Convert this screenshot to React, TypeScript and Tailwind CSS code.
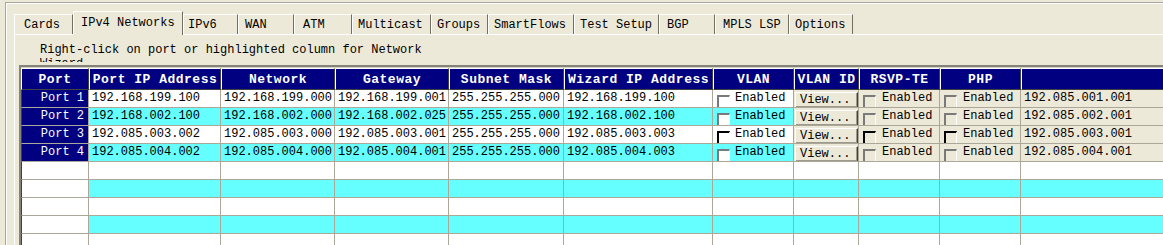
import clsx from "clsx";

type Row = {
  port: string;
  ip: string;
  net: string;
  gw: string;
  mask: string;
  wiz: string;
  last: string;
  dark?: boolean;
};

const rows: Row[] = [
  { port: "Port 1", ip: "192.168.199.100", net: "192.168.199.000", gw: "192.168.199.001", mask: "255.255.255.000", wiz: "192.168.199.100", last: "192.085.001.001" },
  { port: "Port 2", ip: "192.168.002.100", net: "192.168.002.000", gw: "192.168.002.025", mask: "255.255.255.000", wiz: "192.168.002.100", last: "192.085.002.001" },
  { port: "Port 3", ip: "192.085.003.002", net: "192.085.003.000", gw: "192.085.003.001", mask: "255.255.255.000", wiz: "192.085.003.003", last: "192.085.003.001", dark: true },
  { port: "Port 4", ip: "192.085.004.002", net: "192.085.004.000", gw: "192.085.004.001", mask: "255.255.255.000", wiz: "192.085.004.003", last: "192.085.004.001" },
];

const tabs = [
  { label: "Cards", w: "w-[59px] pl-[9px]" },
  { label: "IPv4 Networks", w: "w-[110px] pl-[7px]", active: true },
  { label: "IPv6", w: "w-[55px] pl-[4px]" },
  { label: "WAN", w: "w-[56px] pl-[6px]" },
  { label: "ATM", w: "w-[58px] pl-[8px]" },
  { label: "Multicast", w: "w-[79px] pl-[5px]" },
  { label: "Groups", w: "w-[57px] pl-[5px]" },
  { label: "SmartFlows", w: "w-[86px] pl-[5px]" },
  { label: "Test Setup", w: "w-[85px] pl-[5px]" },
  { label: "BGP", w: "w-[56px] pl-[7px]" },
  { label: "MPLS LSP", w: "w-[74px] pl-[7px]" },
  { label: "Options", w: "w-[64px] pl-[5px]" },
];

const headers = [
  "Port",
  "Port IP Address",
  "Network",
  "Gateway",
  "Subnet Mask",
  "Wizard IP Address",
  "VLAN",
  "VLAN ID",
  "RSVP-TE",
  "PHP",
  "",
];

const line = "border-r border-b border-[#aca899]";

function Check({ dark, disabled }: { dark?: boolean; disabled?: boolean }) {
  return (
    <span
      className={clsx(
        "mt-[5px] block h-[13px] w-[13px] shrink-0 border-t-2 border-l-2 border-r border-b border-r-white border-b-[#f4f2ea]",
        dark ? "border-t-black border-l-black" : "border-t-[#7a7a7a] border-l-[#7a7a7a]",
        disabled ? "bg-[#ece9d8]" : "bg-white"
      )}
    />
  );
}

function TextCell({ children, bg }: { children: React.ReactNode; bg: string }) {
  return (
    <div className={clsx(line, bg, "h-[18px] overflow-hidden whitespace-nowrap pl-[3px] leading-[16px]")}>
      {children}
    </div>
  );
}

export default function App() {
  return (
    <div className="relative h-[245px] w-[1163px] overflow-hidden bg-[#ece9d8] pl-[5px] pt-[2px] font-['Liberation_Mono',monospace] text-[12px] text-black">
      {/* outer frame */}
      <div className="h-[300px] border-l border-t border-[#aca899]">
        <div className="h-full border-l border-t border-white">
          {/* tab strip */}
          <div className="ml-[7px] mt-[7px] flex h-[23px] items-end">
            {tabs.map((t) =>
              t.active ? (
                <div
                  key={t.label}
                  className={clsx(
                    t.w,
                    "relative z-10 -mb-px flex h-[24px] shrink-0 items-center border-l border-t border-r border-white border-r-[#716f64] bg-[#ece9d8] pb-[2px] leading-none"
                  )}
                >
                  {t.label}
                </div>
              ) : (
                <div
                  key={t.label}
                  className={clsx(
                    t.w,
                    "flex h-[20px] shrink-0 items-center border-l border-t border-r border-white border-r-[#716f64] leading-none"
                  )}
                >
                  {t.label}
                </div>
              )
            )}
          </div>

          {/* tab panel */}
          <div className="ml-[7px] h-[260px] border-l border-t border-white">
            {/* label control is shorter than its text: the second line is clipped, as in the original dialog */}
            <div className="mb-[3px] ml-[25px] mt-[8px] h-[19px] w-[400px] overflow-hidden leading-[14px]">
              Right-click on port or highlighted column for Network Wizard
            </div>

            {/* grid */}
            <div className="ml-[4px] border-l-2 border-t-2 border-[#858278] bg-[#d4d0c8] pt-px">
              <div className="grid grid-cols-[68px_132px_114px_114px_115px_149px_81px_65px_81px_81px_180px] bg-white">
                {headers.map((h) => (
                  <div
                    key={h || "blank"}
                    className="flex h-[22px] items-center justify-center overflow-hidden whitespace-nowrap border-l border-t border-white border-r border-b border-r-[#404040] border-b-[#404040] bg-[#000080] pt-px text-[13px] font-bold tracking-[0.5px] text-white"
                  >
                    {h}
                  </div>
                ))}

                {rows.map((r, i) => {
                  const bg = i % 2 === 0 ? "bg-white" : "bg-[#66ffff]";
                  return [
                    <div
                      key={`p${i}`}
                      className="h-[18px] border-l border-l-[#404040] border-r border-b border-[#aca899] bg-[#000080] pr-[4px] text-right leading-[16px] text-white"
                    >
                      {r.port}
                    </div>,
                    <TextCell key={`a${i}`} bg={bg}>{r.ip}</TextCell>,
                    <TextCell key={`b${i}`} bg={bg}>{r.net}</TextCell>,
                    <TextCell key={`c${i}`} bg={bg}>{r.gw}</TextCell>,
                    <TextCell key={`d${i}`} bg={bg}>{r.mask}</TextCell>,
                    <TextCell key={`e${i}`} bg={bg}>{r.wiz}</TextCell>,
                    <div key={`f${i}`} className={clsx(line, bg, "flex h-[18px] items-start gap-[5px] overflow-hidden pl-[4px] leading-[16px]")}>
                      <Check dark={r.dark} />
                      <span>Enabled</span>
                    </div>,
                    <div key={`g${i}`} className={clsx(line, "h-[18px] overflow-hidden bg-[#ece9d8] pl-px pt-[2px]")}>
                      <div className="h-[16px] w-[63px] border-l border-t border-r border-b border-white border-r-[#404040] border-b-[#404040] pl-[4px] leading-[14px] shadow-[inset_-1px_-1px_0_#9d9a8c]">
                        View...
                      </div>
                    </div>,
                    <div key={`h${i}`} className={clsx(line, "flex h-[18px] items-start gap-[6px] overflow-hidden bg-[#ece9d8] pl-[4px] leading-[16px]")}>
                      <Check dark={r.dark} disabled />
                      <span>Enabled</span>
                    </div>,
                    <div key={`k${i}`} className={clsx(line, "flex h-[18px] items-start gap-[6px] overflow-hidden bg-[#ece9d8] pl-[4px] leading-[16px]")}>
                      <Check dark={r.dark} disabled />
                      <span>Enabled</span>
                    </div>,
                    <TextCell key={`l${i}`} bg="bg-[#ece9d8]">{r.last}</TextCell>,
                  ];
                })}

                {[0, 1, 2, 3, 4].map((j) => {
                  const bg = j % 2 === 0 ? "bg-white" : "bg-[#66ffff]";
                  return [
                    <div key={`ep${j}`} className="h-[18px] border-l border-l-[#404040] border-r border-b border-[#aca899] bg-white" />,
                    ...[0, 1, 2, 3, 4, 5, 6, 7, 8, 9].map((c) => (
                      <div key={`e${j}-${c}`} className={clsx(line, bg, "h-[18px]")} />
                    )),
                  ];
                })}
              </div>
            </div>
          </div>
        </div>
      </div>
    </div>
  );
}
